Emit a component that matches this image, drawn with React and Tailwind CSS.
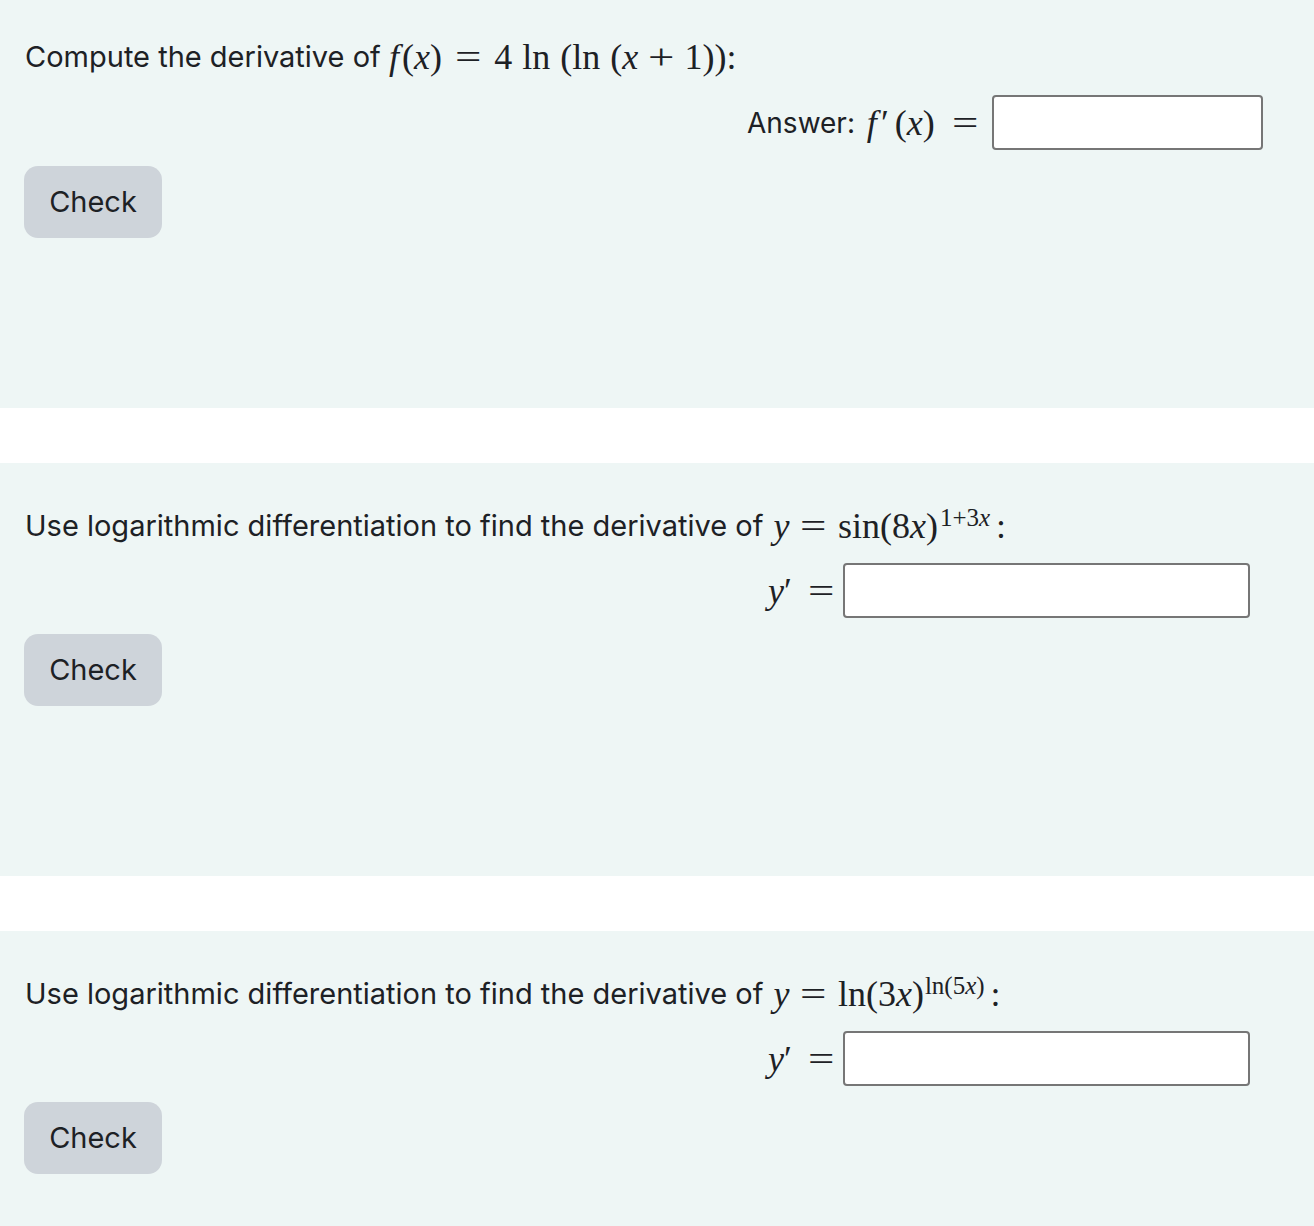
import React from "react";

const serif = { fontFamily: '"Liberation Serif", "Times New Roman", serif' };

function M({ children, className = "" }) {
  return (
    <span className={"text-[36px] leading-none " + className} style={serif}>
      {children}
    </span>
  );
}

function I({ children, className = "" }) {
  return <span className={"italic " + className}>{children}</span>;
}

function Rel({ children, className = "mx-[16px]" }) {
  return (
    <span className={"inline-block scale-x-[1.3] " + className}>{children}</span>
  );
}

function Bin({ children }) {
  return (
    <span className="inline-block scale-x-[1.3] mx-[13px]">{children}</span>
  );
}

function Thin() {
  return <span className="inline-block w-[10px]" />;
}

function CheckButton() {
  return (
    <button className="w-[138px] h-[72px] rounded-[14px] bg-[#ced4da] text-[29px] text-[#1d2125] flex items-center justify-center">
      Check
    </button>
  );
}

function Input({ w }) {
  return (
    <div
      className={
        "h-[55px] shrink-0 bg-white border-2 border-[#767676] rounded-[4px] " + w
      }
    />
  );
}

function Question({ children }) {
  return (
    <div className="h-[42px] flex items-center whitespace-nowrap text-[29px]">
      {children}
    </div>
  );
}

export default function App() {
  return (
    <div
      className="w-[1314px] bg-white text-[#1d2125] text-[28px]"
      style={{ fontFamily: 'Inter, "Noto Sans", sans-serif' }}
    >
      {/* Panel 1 */}
      <section className="bg-[#eef6f5] pl-[25px] pt-[36px] pb-[170px] flex flex-col">
        <Question>
          <span>Compute the derivative of&nbsp;</span>
          <M>
            <I>f</I>
            <span className="ml-[3px]">(</span>
            <I>x</I>)<Rel>=</Rel>4<Thin />ln<Thin />(ln<Thin />(<I>x</I>
            <Bin>+</Bin>1)):
          </M>
        </Question>
        <div className="mt-[17px] h-[55px] flex items-center ml-[722px] whitespace-nowrap">
          <div className="w-[245px] flex items-center">
            <span>Answer:&nbsp;</span>
            <M className="ml-[4px]">
              <I>f</I>
              <span className="ml-[4px]">&prime;</span>
              <span className="ml-[6px]">(</span>
              <I>x</I>)<Rel className="ml-[20px]">=</Rel>
            </M>
          </div>
          <Input w="w-[271px]" />
        </div>
        <div className="mt-[16px] -ml-[1px]">
          <CheckButton />
        </div>
      </section>

      <div className="h-[55px]" />

      {/* Panel 2 */}
      <section className="bg-[#eef6f5] pl-[25px] pt-[42px] pb-[170px] flex flex-col">
        <Question>
          <span>Use logarithmic differentiation to find the derivative of&nbsp;</span>
          <M className="ml-[2px]">
            <I>y</I>
            <Rel className="ml-[13px] mr-[15px]">=</Rel>sin(8<I>x</I>)
            <sup className="text-[25px] ml-[2px]">
              1+3<I>x</I>
            </sup>
            <span className="ml-[6px]">:</span>
          </M>
        </Question>
        <div className="mt-[16px] h-[55px] flex items-center ml-[743px] whitespace-nowrap">
          <div className="w-[75px] flex items-center">
            <M>
              <I>y</I>&prime;<Rel className="ml-[19px]">=</Rel>
            </M>
          </div>
          <Input w="w-[407px]" />
        </div>
        <div className="mt-[16px] -ml-[1px]">
          <CheckButton />
        </div>
      </section>

      <div className="h-[55px]" />

      {/* Panel 3 */}
      <section className="bg-[#eef6f5] pl-[25px] pt-[42px] pb-[170px] flex flex-col">
        <Question>
          <span>Use logarithmic differentiation to find the derivative of&nbsp;</span>
          <M className="ml-[2px]">
            <I>y</I>
            <Rel className="ml-[13px] mr-[15px]">=</Rel>ln(3<I>x</I>)
            <sup className="text-[25px] ml-[1px]">
              ln(5<I>x</I>)
            </sup>
            <span className="ml-[6px]">:</span>
          </M>
        </Question>
        <div className="mt-[16px] h-[55px] flex items-center ml-[743px] whitespace-nowrap">
          <div className="w-[75px] flex items-center">
            <M>
              <I>y</I>&prime;<Rel className="ml-[19px]">=</Rel>
            </M>
          </div>
          <Input w="w-[407px]" />
        </div>
        <div className="mt-[16px] -ml-[1px]">
          <CheckButton />
        </div>
      </section>
    </div>
  );
}
